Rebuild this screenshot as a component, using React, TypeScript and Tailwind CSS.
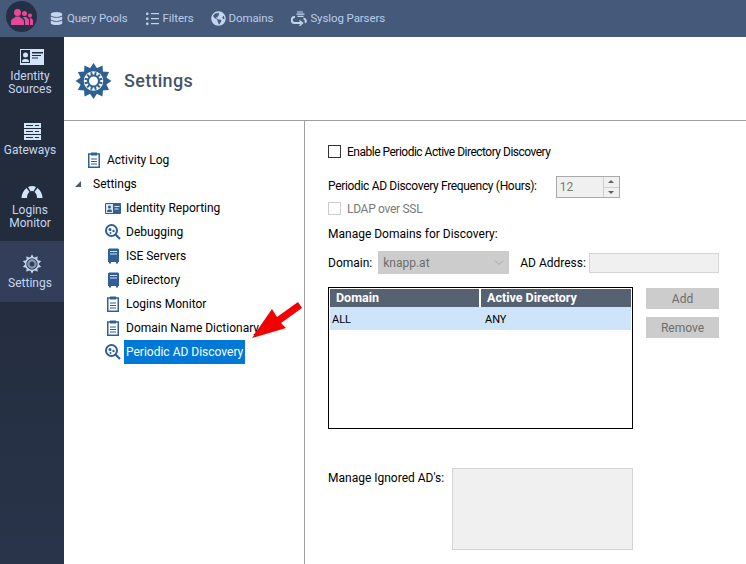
import { FaDatabase, FaGlobeAmericas } from "react-icons/fa";
import type { ReactNode } from "react";

const font = "font-['Roboto','Liberation_Sans',sans-serif]";

function PeopleLogo() {
  return (
    <svg width="22" height="16" viewBox="0 0 22 16" fill="#e8489a">
      <circle cx="6.500" cy="3.500" r="3.500" />
      <path d="M0 16v-3.500C0 10 3 9.500 4.500 7.500h4C10 9.500 13 10 13 12.500V16z" />
      <circle cx="13.500" cy="4.500" r="2.500" />
      <path d="M14 16v-4c0-1.500-1-2.500-2-3.500l.5-.5h3c.8 1.500 2.500 1.500 2.500 3.500V16z" />
      <circle cx="19" cy="6.500" r="2" />
      <path d="M19 16v-5c0-.8-.3-1.300-.7-1.800h2c.5.800 1.700 1 1.700 2.300V16z" />
    </svg>
  );
}

function FilterListIcon() {
  return (
    <svg width="13" height="14" viewBox="0 0 13 14" fill="#c3d5ee">
      <rect x="0" y="0.500" width="2.500" height="2.500" rx="1" />
      <rect x="0" y="5.500" width="2.500" height="2.500" rx="1" />
      <rect x="0" y="10.500" width="2.500" height="2.500" rx="1" />
      <rect x="5" y="1" width="8" height="1.200" />
      <rect x="5" y="6" width="8" height="1.200" />
      <rect x="5" y="11" width="8" height="1.200" />
    </svg>
  );
}

function SyslogIcon() {
  return (
    <svg width="16" height="16" viewBox="0 0 16 16" fill="none" stroke="#c3d5ee" strokeWidth="1.200">
      <path d="M6 1h6M5.500 3.200h8M6.500 5.400h6" />
      <path d="M4 6A3 3 0 0 0 3.500 12H10" strokeWidth="2" />
      <path d="M8.500 9.500 11.500 12 8.500 14.800" strokeWidth="1.500" />
      <path d="M12.500 7.500a2.500 2.500 0 0 1 1.500 4.300" strokeWidth="2" />
    </svg>
  );
}

function NavLink({ icon, label, gap }: { icon: ReactNode; label: string; gap: string }) {
  return (
    <div className={`flex items-center ${gap}`}>
      {icon}
      <span className="text-[11.5px] tracking-[-0.1px] text-[#b9cdea]">{label}</span>
    </div>
  );
}

function IdCardLight() {
  return (
    <svg width="24" height="16" viewBox="0 0 24 16">
      <rect width="24" height="16" fill="#d3e3f8" />
      <rect x="1" y="1" width="9" height="13" fill="#232c3d" />
      <circle cx="5.500" cy="6" r="2.500" fill="#d3e3f8" />
      <path d="M2 13c0-3 2-3 3.500-3S9 10 9 13z" fill="#d3e3f8" />
      <path d="M12 3h11v1.500H12zM12 6h9v1H12zM12 8.500h6v1h-6z" fill="#232c3d" />
    </svg>
  );
}

function GatewayIcon() {
  return (
    <svg width="17" height="17" viewBox="0 0 17 17">
      <rect width="17" height="5" fill="#d3e3f8" />
      <rect y="6" width="17" height="5" fill="#d3e3f8" />
      <rect y="12" width="17" height="5" fill="#d3e3f8" />
      <path d="M2 2h7v1H2zM11 2h4v1h-4zM2 8h7v1H2zM11 8h4v1h-4zM2 14h7v1H2zM11 14h4v1h-4z" fill="#232c3d" />
    </svg>
  );
}

function GaugeIcon() {
  return (
    <svg width="22" height="13" viewBox="0 0 22 13" fill="#d3e3f8">
      <path d="M0.500 13C0.500 9 2.500 5.500 5.500 3L8.500 7C7 8 6 10 6 13z" />
      <path d="M7 2C10 0.500 12.500 0.500 15 2L12.500 6.300a4 4 0 0 0-3 0z" />
      <path d="M16.500 3c3 2.500 5 6 5 10H16c0-3-1-5-2.500-6z" />
    </svg>
  );
}

function SmallGear() {
  const spikes = Array.from({ length: 10 }, (_, i) => 36 * i);
  return (
    <svg width="20" height="20" viewBox="0 0 36 36">
      {spikes.map((a) => (
        <path key={a} d="M14.500 7 18 0.500 21.500 7z" fill="#c3d7f2" transform={`rotate(${a} 18 18)`} />
      ))}
      <circle cx="18" cy="18" r="11.500" fill="none" stroke="#c3d7f2" strokeWidth="2.500" />
      <circle cx="18" cy="18" r="6.500" fill="none" stroke="#8b99ad" strokeWidth="4" />
    </svg>
  );
}

function BigGear() {
  const spikes = Array.from({ length: 12 }, (_, i) => 30 * i);
  const teeth = Array.from({ length: 12 }, (_, i) => 30 * i + 15);
  return (
    <svg width="37" height="36" viewBox="0 0 37 36">
      <g transform="translate(18.500 18)">
        {spikes.map((a) => (
          <path key={a} d="M-4 -12 0 -18 4 -12z" fill="#2f6092" transform={`rotate(${a})`} />
        ))}
        <circle r="11.500" fill="none" stroke="#2f6092" strokeWidth="3.500" />
        {teeth.map((a) => (
          <rect key={a} x="-1" y="-9" width="2" height="3" fill="#2f6092" transform={`rotate(${a})`} />
        ))}
        <circle r="5.500" fill="none" stroke="#2f6092" strokeWidth="2" />
      </g>
    </svg>
  );
}

function SideItem({ icon, lines }: { icon: ReactNode; lines: string[] }) {
  return (
    <div className="flex flex-col items-center">
      <div className="flex h-[20px] items-center justify-center">{icon}</div>
      <div className="mt-[3px] pr-[4px] text-center text-[12px] leading-[13px] text-[#c3d7f2]">
        {lines.map((l) => (
          <div key={l}>{l}</div>
        ))}
      </div>
    </div>
  );
}

function Clipboard() {
  return (
    <svg width="12" height="16" viewBox="0 0 12 16">
      <rect x="0.750" y="2" width="10.500" height="13.250" fill="none" stroke="#2f5f96" strokeWidth="1.500" />
      <rect x="3" y="0.500" width="6" height="3" fill="#2f5f96" />
      <path d="M3 6.500h6v1H3zM3 9h6v1H3zM3 11.500h6v1H3z" fill="#2f5f96" />
    </svg>
  );
}

function Server() {
  return (
    <svg width="11" height="16" viewBox="0 0 11 16">
      <path d="M0 1.500 1 0.500h9l1 1V14h-1v1.500H8V14H3v1.500H1V14H0z" fill="#2f5f96" />
      <path d="M2 3h7v1H2zM2 5.500h7v1H2z" fill="#dbe6f2" />
    </svg>
  );
}

function Magnifier() {
  return (
    <svg width="16" height="16" viewBox="0 0 16 16">
      <circle cx="6.500" cy="6.500" r="5.500" fill="none" stroke="#2f5f96" strokeWidth="2" />
      <circle cx="5" cy="5.500" r="1.500" fill="#2f5f96" />
      <circle cx="8.500" cy="7" r="1.200" fill="#2f5f96" />
      <circle cx="5.500" cy="9" r="1" fill="#2f5f96" />
      <path d="M10.500 10.500 15 15" stroke="#2f5f96" strokeWidth="2.200" />
    </svg>
  );
}

function IdCardBlue() {
  return (
    <svg width="16" height="11" viewBox="0 0 16 11">
      <rect width="16" height="11" rx="1" fill="#2f5f96" />
      <rect x="1" y="1" width="7" height="9" fill="#dbe6f2" />
      <circle cx="4.500" cy="4" r="1.500" fill="#2f5f96" />
      <path d="M2 9c0-2 1-2.500 2.500-2.500S7 7 7 9z" fill="#2f5f96" />
      <path d="M9.500 3h5v1h-5zM9.500 5.500h4v1h-4z" fill="#dbe6f2" />
    </svg>
  );
}

function TreeRow({ icon, label, selected }: { icon: ReactNode; label: string; selected?: boolean }) {
  return (
    <div className="flex h-[24px] items-center pl-[41px]">
      <div className="flex w-[16px] justify-center">{icon}</div>
      <span
        className={`ml-[3px] px-[2px] text-[12px] leading-[24px] ${
          selected ? "bg-[#0078d7] text-white" : "text-black"
        }`}
      >
        {label}
      </span>
    </div>
  );
}

export default function App() {
  return (
    <div className={`relative flex h-[564px] w-[746px] flex-col overflow-hidden bg-white ${font}`}>
      <header className="flex h-[37px] shrink-0 items-center bg-[#45597b] pl-[6px]">
        <div className="mt-[1px] flex h-[31px] w-[31px] items-center justify-center self-start rounded-full bg-[#252f45]">
          <PeopleLogo />
        </div>
        <div className="ml-[13px] flex items-center">
          <NavLink icon={<FaDatabase size={13} color="#c3d5ee" />} label="Query Pools" gap="gap-[4px]" />
          <div className="ml-[18px]">
            <NavLink icon={<FilterListIcon />} label="Filters" gap="gap-[4px]" />
          </div>
          <div className="ml-[17px]">
            <NavLink icon={<FaGlobeAmericas size={15} color="#c3d5ee" />} label="Domains" gap="gap-[3px]" />
          </div>
          <div className="ml-[18px]">
            <NavLink icon={<SyslogIcon />} label="Syslog Parsers" gap="gap-[3px]" />
          </div>
        </div>
      </header>

      <div className="flex min-h-0 flex-1">
        <aside className="flex w-[64px] shrink-0 flex-col bg-gradient-to-b from-[#232c3d] from-40% to-[#29344a]">
          <div className="mt-[10px]">
            <SideItem icon={<IdCardLight />} lines={["Identity", "Sources"]} />
          </div>
          <div className="mt-[25px]">
            <SideItem icon={<GatewayIcon />} lines={["Gateways"]} />
          </div>
          <div className="mt-[24px]">
            <SideItem icon={<GaugeIcon />} lines={["Logins", "Monitor"]} />
          </div>
          <div className="mt-[11px] h-[61px] bg-[#333f5a] pt-[13px]">
            <SideItem icon={<SmallGear />} lines={["Settings"]} />
          </div>
        </aside>

        <main className="flex min-w-0 flex-1 flex-col">
          <div className="flex h-[84px] shrink-0 items-center border-b border-[#a0a0a0] pl-[11px] pt-[4px]">
            <BigGear />
            <h1 className="ml-[12px] text-[18px] font-medium tracking-[0.3px] text-[#44556b]">Settings</h1>
          </div>

          <div className="flex min-h-0 flex-1">
            <nav className="w-[241px] shrink-0 border-r border-[#a0a0a0] pt-[27px]">
              <div className="flex h-[24px] items-center pl-[22px]">
                <div className="flex w-[16px] justify-center">
                  <Clipboard />
                </div>
                <span className="ml-[5px] text-[12px] text-black">Activity Log</span>
              </div>
              <div className="flex h-[24px] items-center pl-[11px]">
                <span className="h-0 w-0 border-b-[6px] border-l-[6px] border-b-[#4d5a68] border-l-transparent" />
                <span className="ml-[12px] text-[12px] text-black">Settings</span>
              </div>
              <TreeRow icon={<IdCardBlue />} label="Identity Reporting" />
              <TreeRow icon={<Magnifier />} label="Debugging" />
              <TreeRow icon={<Server />} label="ISE Servers" />
              <TreeRow icon={<Server />} label="eDirectory" />
              <TreeRow icon={<Clipboard />} label="Logins Monitor" />
              <TreeRow icon={<Clipboard />} label="Domain Name Dictionary" />
              <TreeRow icon={<Magnifier />} label="Periodic AD Discovery" selected />
            </nav>

            <section className="min-w-0 flex-1 pl-[23px] pt-[24px] text-[12px] text-black">
              <label className="flex h-[13px] items-center">
                <span className="h-[13px] w-[13px] border border-[#333333] bg-white" />
                <span className="ml-[6px] tracking-[-0.5px]">Enable Periodic Active Directory Discovery</span>
              </label>

              <div className="mt-[18px] flex h-[22px] items-center">
                <span className="pb-[2px] tracking-[-0.33px]">Periodic AD Discovery Frequency (Hours):</span>
                <div className="ml-[19px] flex h-[22px] w-[64px] items-center justify-between border border-[#a9a9a9] bg-[#f0f0f0] pl-[3px] text-[#7a7a7a]">
                  12
                  <div className="flex h-full w-[16px] flex-col border-l border-[#cfcfcf]">
                    <div className="flex flex-1 items-center justify-center border-b border-[#cfcfcf]">
                      <span className="h-0 w-0 border-x-[3px] border-b-[3px] border-x-transparent border-b-[#606060]" />
                    </div>
                    <div className="flex flex-1 items-center justify-center">
                      <span className="h-0 w-0 border-x-[3px] border-t-[3px] border-x-transparent border-t-[#606060]" />
                    </div>
                  </div>
                </div>
              </div>

              <div className="mt-[4px] flex h-[13px] items-center text-[#7a7a7a]">
                <span className="h-[13px] w-[13px] border border-[#cccccc] bg-white" />
                <span className="ml-[6px] tracking-[-0.3px]">LDAP over SSL</span>
              </div>

              <div className="mt-[12px] h-[14px] leading-[14px]">Manage Domains for Discovery:</div>

              <div className="mt-[10px] flex h-[23px] items-center">
                <span>Domain:</span>
                <div className="ml-[6px] flex h-[23px] w-[131px] items-center justify-between bg-[#cccccc] pl-[5px] pr-[5px] text-[#6d6d6d]">
                  knapp.at
                  <svg width="10" height="6" viewBox="0 0 10 6" fill="none" stroke="#a8a8a8">
                    <path d="M1 .500 5 4.500 9 .500" />
                  </svg>
                </div>
                <span className="ml-[11px]">AD Address:</span>
                <div className="ml-[3px] h-[20px] w-[130px] border border-[#d4d4d4] bg-[#f0f0f0]" />
              </div>

              <div className="mt-[13px] flex items-start">
                <div className="h-[142px] w-[305px] border border-black bg-white p-[1px]">
                  <div className="flex h-[18px] bg-[#566272] text-[12.500px] font-bold leading-[18px] text-white">
                    <div className="w-[151px] border-r-2 border-white pl-[6px]">Domain</div>
                    <div className="pl-[6px]">Active Directory</div>
                  </div>
                  <div className="flex h-[23px] bg-[#cde4fb] text-[11px] leading-[25px]">
                    <div className="w-[152px] pl-[2px]">ALL</div>
                    <div className="pl-[3px]">ANY</div>
                  </div>
                </div>
                <div className="ml-[13px] mt-[1px] flex flex-col gap-[8px]">
                  <div className="flex h-[21px] w-[73px] items-center justify-center bg-[#cccccc] text-[#6d6d6d]">Add</div>
                  <div className="flex h-[21px] w-[73px] items-center justify-center bg-[#cccccc] text-[#6d6d6d]">Remove</div>
                </div>
              </div>

              <div className="mt-[39px] flex items-start">
                <span className="w-[124px] pt-[1px]">Manage Ignored AD's:</span>
                <div className="h-[82px] w-[181px] border border-[#d4d4d4] bg-[#f0f0f0]" />
              </div>
            </section>
          </div>
        </main>
      </div>

      <svg className="absolute left-[252px] top-[301px]" width="52" height="40" viewBox="0 0 52 40" fill="#f50000">
        <path d="M0 37 20 8 25 16 46 1 50 7 29 22 34 27z" />
      </svg>
    </div>
  );
}
